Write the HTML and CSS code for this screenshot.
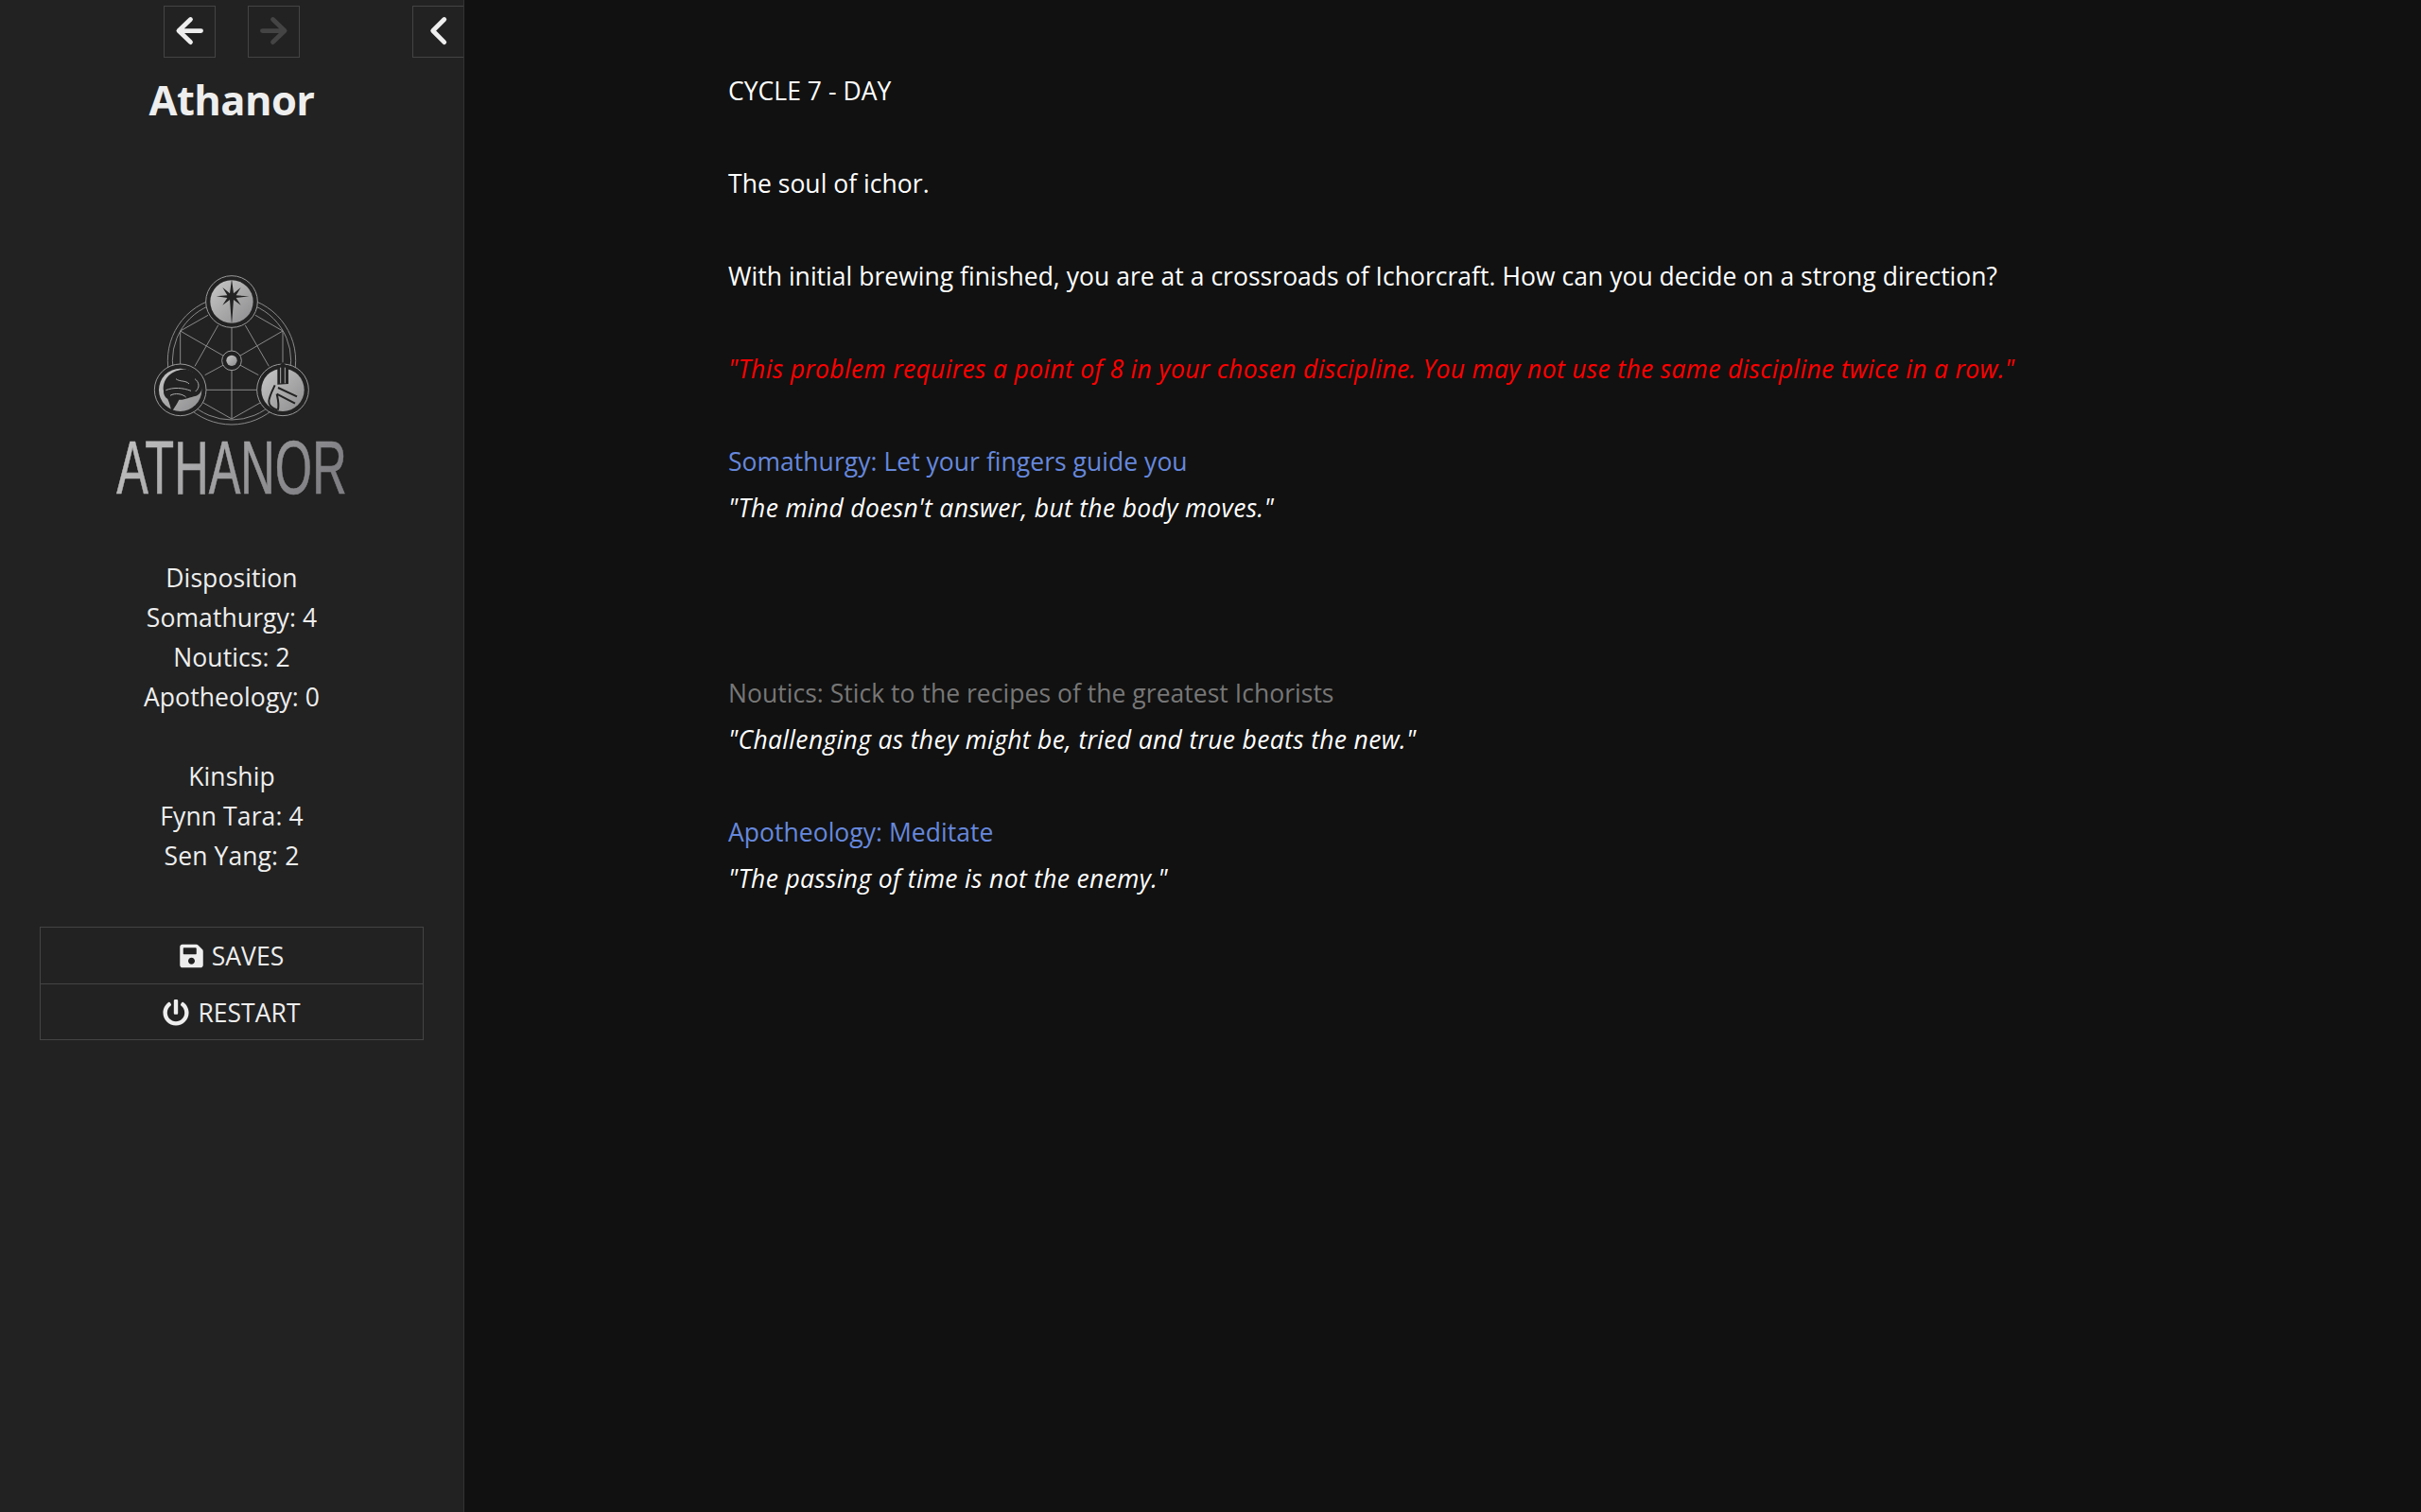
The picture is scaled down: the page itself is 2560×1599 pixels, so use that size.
FILE: index.html
```html
<!DOCTYPE html>
<html lang="en">
<head>
<meta charset="utf-8">
<title>Athanor</title>
<link rel="stylesheet" href="styles.css">
</head>
<body>
<div class="app">
  <aside class="sidebar">
    <nav class="nav">
      <button class="nav-btn"><svg class="nav-icon" viewBox="0 0 55 55"><path d="M40 26.500H16M28.500 14 15.500 26.500 28.500 39"/></svg></button>
      <button class="nav-btn nav-btn-off"><svg class="nav-icon" viewBox="0 0 55 55"><path d="M15 26.500H39M26.500 14 39.500 26.500 26.500 39"/></svg></button>
      <button class="nav-btn nav-btn-end"><svg class="nav-icon" viewBox="0 0 55 55"><path d="M34 14 21.500 26.500 34 39"/></svg></button>
    </nav>
    <h1 class="title">Athanor</h1>
    <svg class="logo" viewBox="-15 0 900 810">
      <defs>
        <linearGradient id="metal" x1="0" y1="0" x2="1" y2="0.3">
          <stop offset="0" stop-color="#c4c4c4"/>
          <stop offset="0.5" stop-color="#a4a4a6"/>
          <stop offset="1" stop-color="#808084"/>
        </linearGradient>
        <linearGradient id="disc" x1="0" y1="0" x2="1" y2="1">
          <stop offset="0" stop-color="#c8c8c8"/>
          <stop offset="1" stop-color="#8c8c8e"/>
        </linearGradient>
      </defs>
      <g class="logo-lines">
        <circle cx="435" cy="334" r="203"/>
        <circle cx="435" cy="334" r="188"/>
        <path d="M272 240 360 190M597 240 510 190M272 240V427M597 240V427M272 240 435 334 597 240M435 147V519M272 427H597M392 222 318 352M478 222 553 352M350 380 435 334 520 380M345 468 435 519 525 468"/>
      </g>
      <g class="logo-bg">
        <circle cx="435" cy="147" r="82"/><circle cx="272" cy="427" r="82"/><circle cx="597" cy="427" r="82"/><circle cx="435" cy="334" r="31"/>
      </g>
      <g class="logo-rings">
        <circle cx="435" cy="147" r="82"/><circle cx="272" cy="427" r="82"/><circle cx="597" cy="427" r="82"/><circle cx="435" cy="334" r="31"/>
      </g>
      <circle cx="435" cy="147" r="68" fill="url(#disc)"/>
      <circle cx="272" cy="427" r="68" fill="url(#disc)"/>
      <circle cx="597" cy="427" r="68" fill="url(#disc)"/>
      <circle cx="435" cy="334" r="17" fill="url(#disc)"/>
      <path class="logo-dark" d="M435 75 441 121 464 102 449 127 490 130 449 135 464 158 441 141 435 220 429 141 406 158 421 135 386 130 421 127 406 102 429 121Z"/>
      <path class="logo-dark" d="M219 430C214 395 240 366 280 362 305 360 325 378 340 398 346 420 338 440 322 446 300 450 285 460 268 458 262 470 255 480 244 497 241 480 238 470 232 456 222 450 218 440 219 430Z"/>
      <g class="logo-cut">
        <path d="M226 428C250 418 280 420 306 430M240 445C255 435 280 440 290 450M258 392C270 402 290 396 300 408M318 392C332 402 335 420 320 432"/>
      </g>
      <path class="logo-dark" d="M580 410V358L597 338 615 358V408Z"/>
      <g class="logo-cut">
        <path d="M590 406V356M604 406V356"/>
      </g>
      <g class="logo-hand">
        <path d="M572 412C566 425 555 445 553 462 552 475 562 485 580 491M582 420 642 448M578 440 636 470M582 491C586 470 580 450 578 440"/>
      </g>
      <text class="logo-word" x="70" y="757" textLength="730" lengthAdjust="spacingAndGlyphs" fill="url(#metal)" stroke="url(#metal)">ATHANOR</text>
    </svg>
    <div class="stats">
      <div>Disposition</div>
      <div>Somathurgy: 4</div>
      <div>Noutics: 2</div>
      <div>Apotheology: 0</div>
      <div class="stats-gap">Kinship</div>
      <div>Fynn Tara: 4</div>
      <div>Sen Yang: 2</div>
    </div>
    <div class="menu">
      <button class="menu-btn"><svg class="menu-icon menu-save" viewBox="0 0 448 512"><path d="M433.941 129.941l-83.882-83.882A48 48 0 0 0 316.118 32H48C21.49 32 0 53.49 0 80v352c0 26.51 21.49 48 48 48h352c26.51 0 48-21.49 48-48V163.882a48 48 0 0 0-14.059-33.941zM224 416c-35.346 0-64-28.654-64-64 0-35.346 28.654-64 64-64s64 28.654 64 64c0 35.346-28.654 64-64 64zm96-304.52V212c0 6.627-5.373 12-12 12H76c-6.627 0-12-5.373-12-12V108c0-6.627 5.373-12 12-12h228.52c3.183 0 6.235 1.264 8.485 3.515l3.48 3.48A11.996 11.996 0 0 1 320 111.48z"/></svg>SAVES</button>
      <button class="menu-btn"><svg class="menu-icon" viewBox="0 0 512 512"><path d="M400 54.1c63 45 104 118.6 104 201.9 0 136.8-110.8 247.7-247.5 248C120 504.3 8.2 393 8 256.4 7.9 173.1 48.9 99.3 111.8 54.2c11.7-8.3 28-4.8 35 7.7L162.6 90c5.9 10.5 3.1 23.8-6.6 31-41.5 30.8-68 79.6-68 134.9-.1 92.3 74.5 168.1 168 168.1 91.6 0 168.6-74.2 168-169.1-.3-51.8-24.7-101.8-68.1-134-9.7-7.2-12.4-20.5-6.4-30.9l15.8-28.1c7-12.4 23.2-16.1 34.8-7.9zM296 264V24c0-13.3-10.7-24-24-24h-32c-13.3 0-24 10.7-24 24v240c0 13.3 10.7 24 24 24h32c13.3 0 24-10.7 24-24z"/></svg>RESTART</button>
    </div>
  </aside>
  <main class="story">
    <p class="para">CYCLE 7 - DAY</p>
    <p class="para">The soul of ichor.</p>
    <p class="para">With initial brewing finished, you are at a crossroads of Ichorcraft. How can you decide on a strong direction?</p>
    <p class="para warn">"This problem requires a point of 8 in your chosen discipline. You may not use the same discipline twice in a row."</p>
    <div class="choice choice-far">
      <a class="link">Somathurgy: Let your fingers guide you</a>
      <p class="quote">"The mind doesn't answer, but the body moves."</p>
    </div>
    <div class="choice">
      <a class="link link-off">Noutics: Stick to the recipes of the greatest Ichorists</a>
      <p class="quote">"Challenging as they might be, tried and true beats the new."</p>
    </div>
    <div class="choice">
      <a class="link">Apotheology: Meditate</a>
      <p class="quote">"The passing of time is not the enemy."</p>
    </div>
  </main>
</div>
</body>
</html>
```

FILE: styles.css
```css
* { box-sizing: border-box; }
html, body { margin: 0; height: 100%; }
body {
  background: #111;
  color: #fff;
  font-family: "Open Sans", "Noto Sans", sans-serif;
  font-size: 26.5px;
  letter-spacing: 0.03px;
}
.app { display: flex; height: 1599px; overflow: hidden; }
.sidebar {
  flex: 0 0 491px;
  background: #222;
  border-right: 1px solid #333;
  color: #eee;
  display: flex;
  flex-direction: column;
  align-items: center;
}
.nav {
  align-self: stretch;
  display: flex;
  gap: 34px;
  padding: 6px 0 0 173px;
}
.nav-btn {
  width: 55px;
  height: 55px;
  padding: 0;
  background: transparent;
  border: 1px solid #444;
  color: #eee;
  display: block;
}
.nav-btn-off { color: #444; }
.nav-btn-end { margin-left: auto; width: 54px; border-right: 0; }
.nav-icon {
  display: block;
  width: 53px;
  height: 53px;
  fill: none;
  stroke: currentColor;
  stroke-width: 5;
  stroke-linecap: round;
  stroke-linejoin: round;
}
.title {
  margin: 15px 0 0;
  font-size: 43.500px;
  line-height: 60px;
  font-weight: 700;
  letter-spacing: -0.6px;
  color: #eee;
}
.logo { width: 300px; height: 270px; margin-top: 134px; display: block; overflow: visible; }
.logo-lines { fill: none; stroke: #8a8a8a; stroke-width: 3; }
.logo-bg { fill: #222; }
.logo-rings { fill: none; stroke: #9a9a9a; stroke-width: 3; }
.logo-dark { fill: #222; }
.logo-cut { fill: none; stroke: #aaa; stroke-width: 3; }
.logo-hand { fill: none; stroke: #222; stroke-width: 6; }
.logo-word {
  font-family: "Liberation Sans Narrow", "Liberation Sans", sans-serif;
  font-size: 238px;
  letter-spacing: 0;
  stroke-width: 2px;
}
.stats {
  margin-top: 50px;
  text-align: center;
  line-height: 42px;
  letter-spacing: 0.1px;
}
.stats-gap { margin-top: 42px; }
.menu {
  margin-top: 54px;
  width: 406px;
  border: 1px solid #444;
  display: flex;
  flex-direction: column;
}
.menu-btn {
  height: 59px;
  padding: 1px 0 0;
  background: transparent;
  border: 0;
  color: #eee;
  font: inherit;
  letter-spacing: inherit;
  display: flex;
  align-items: center;
  justify-content: center;
  gap: 9px;
}
.menu-btn + .menu-btn { border-top: 1px solid #444; }
.menu-icon { width: 28px; height: 28px; fill: currentColor; display: block; }
.menu-save { width: 25px; }
.story {
  flex: 1;
  padding: 72px 0 0 279px;
  line-height: 49px;
}
.para { margin: 0 0 49px; }
.warn { color: #f00; font-style: italic; letter-spacing: 0.33px; }
.choice { margin-bottom: 49px; }
.choice-far { margin-bottom: 147px; }
.link { color: #68d; display: block; }
.link-off { color: #777; }
.quote { margin: 0; font-style: italic; letter-spacing: 0.33px; }
```
